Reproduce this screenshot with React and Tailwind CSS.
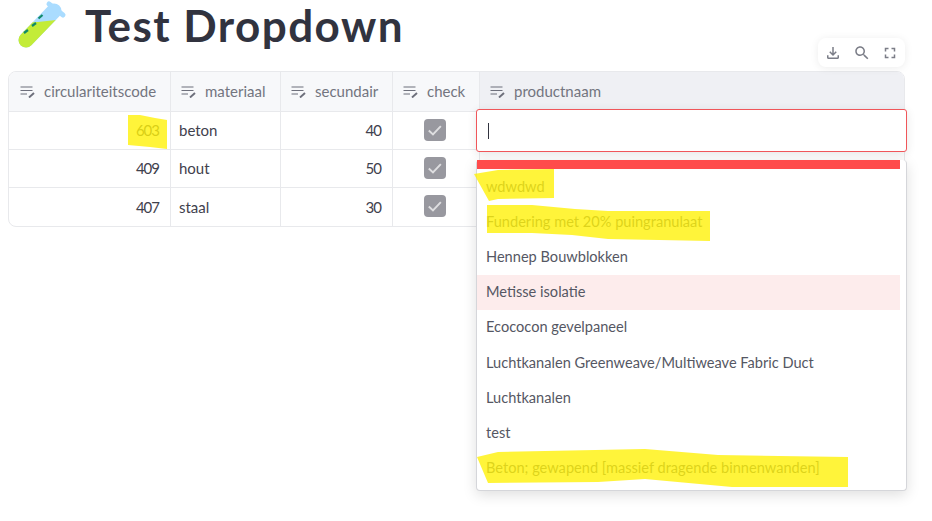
import React from 'react';

const columns = [
    { name: 'circulariteitscode', width: 'w-[162px] pl-[11px]' },
    { name: 'materiaal', width: 'w-[110px] pl-[10px]' },
    { name: 'secundair', width: 'w-[112px] pl-[10px]' },
    { name: 'check', width: 'w-[87px] pl-[10px]' },
];

const rows = [
    { code: 603, material: 'beton', secondary: 40 },
    { code: 409, material: 'hout', secondary: 50 },
    { code: 407, material: 'staal', secondary: 30 },
];

const options = [
    'wdwdwd',
    'Fundering met 20% puingranulaat',
    'Hennep Bouwblokken',
    'Metisse isolatie',
    'Ecococon gevelpaneel',
    'Luchtkanalen Greenweave/Multiweave Fabric Duct',
    'Luchtkanalen',
    'test',
    'Beton; gewapend [massief dragende binnenwanden]',
];

const strokes = [
    '128,115 140,115 155,118 167,120 167,149 150,147 128,145',
    '474,174 498,170 554,169 554,198 498,199 489,201',
    '487,205 532,205 575,209 608,211 710,211 710,241 608,239 572,235 532,233 487,233',
    '477,457 498,452 645,449 718,455 848,457 848,487 732,487 645,479 598,482 488,483',
];

const TestTube = () => (
    <svg width="60" height="52" viewBox="14 0 60 52" className="shrink-0">
        <defs>
            <clipPath id="liquid">
                <polygon points="0,23 38,22 56,20 74,20 74,60 0,60" />
            </clipPath>
        </defs>
        <line x1="26" y1="40" x2="54" y2="11" stroke="#aadcff" strokeWidth="15" strokeLinecap="round" />
        <line x1="26" y1="40" x2="54" y2="11" stroke="#c3ec38" strokeWidth="15" strokeLinecap="round" clipPath="url(#liquid)" />
        <line x1="49" y1="4" x2="63" y2="15" stroke="#aadcff" strokeWidth="5" strokeLinecap="round" />
        <g stroke="#0f8a6a" strokeWidth="2.2">
            <line x1="24" y1="33" x2="28" y2="30" />
            <line x1="32" y1="26" x2="36" y2="23" />
            <line x1="38.5" y1="18.5" x2="42.5" y2="15" />
        </g>
    </svg>
);

const HeaderIcon = () => (
    <svg width="16" height="12" viewBox="0 0 16 12" fill="none" className="shrink-0 text-[#6d6f7b]">
        <path d="M0.5 1h12M0.5 4.5h12M0.5 8h6.5" stroke="currentColor" strokeWidth="1.1" />
        <path d="M9 11.5l5-4.5" stroke="currentColor" strokeWidth="1.9" />
    </svg>
);

const HeaderCell = ({ name, className }) => (
    <div className={`flex items-center gap-[8px] border-r border-[#e8e9ec] ${className}`}>
        <HeaderIcon />
        <span className="text-[15px] text-[#73757f]">{name}</span>
    </div>
);

const CheckBox = () => (
    <div className="w-[22px] h-[22px] rounded-[4px] bg-[#98989f] flex items-center justify-center">
        <svg width="18" height="18" viewBox="0 0 16 16" fill="none">
            <path d="M2.5 8.5l3.7 3.5 7-7.5" stroke="#dedee0" strokeWidth="1.7" />
        </svg>
    </div>
);

const MaterialIcon = ({ d }) => (
    <svg width="18" height="18" viewBox="0 0 24 24" fill="#7b7d87"><path d={d} /></svg>
);

const App = () => {
    return (
        <div className="relative w-[932px] h-[521px] overflow-hidden bg-white font-['Lato','Noto_Sans',sans-serif] text-[#3f414d]">
            <div className="flex items-start h-[55px] pl-[14px] gap-[11px]">
                <TestTube />
                <h1 className="mt-[3px] text-[44px] tracking-[1.45px] font-bold text-[#31333f] leading-none whitespace-nowrap">Test Dropdown</h1>
            </div>

            <div className="relative mt-[16px] mx-[8px] w-[897px]">
                <div className="rounded-lg border border-[#e8e9ec] overflow-hidden bg-white">
                    <div className="flex h-[40px] bg-[#f7f8fa] border-b border-[#e8e9ec]">
                        {columns.map(c => <HeaderCell key={c.name} name={c.name} className={c.width} />)}
                        <HeaderCell name="productnaam" className="flex-1 pl-[10px] bg-[#eff0f4] border-r-0" />
                    </div>
                    {rows.map((r, i) => (
                        <div key={r.code} className={`flex h-[38px] text-[15px] ${i < 2 ? 'border-b border-[#e8e9ec]' : ''}`}>
                            <div className="w-[162px] flex items-center justify-end pr-[11px] tracking-[-1px] border-r border-[#e8e9ec]">{r.code}</div>
                            <div className="w-[110px] flex items-center pl-[8px] border-r border-[#e8e9ec]">{r.material}</div>
                            <div className="w-[112px] flex items-center justify-end pr-[11px] tracking-[-1px] border-r border-[#e8e9ec]">{r.secondary}</div>
                            <div className="w-[87px] flex items-center justify-center pr-[2px] pb-[2px] border-r border-[#e8e9ec]"><CheckBox /></div>
                            <div className="flex-1" />
                        </div>
                    ))}
                </div>

                {/* toolbar above the grid */}
                <div className="absolute right-0 -top-[33px] flex items-center justify-between w-[87px] h-[29px] px-[6px] rounded-lg bg-white shadow-[0_1px_8px_rgba(0,0,0,0.08)]">
                    <MaterialIcon d="M18 15v3H6v-3H4v3c0 1.1.9 2 2 2h12c1.1 0 2-.9 2-2v-3h-2zm-1-4l-1.41-1.41L13 12.17V4h-2v8.17L8.41 9.59 7 11l5 5 5-5z" />
                    <MaterialIcon d="M15.5 14h-.79l-.28-.27C15.41 12.59 16 11.11 16 9.5 16 5.91 13.09 3 9.5 3S3 5.91 3 9.5 5.91 16 9.5 16c1.61 0 3.09-.59 4.23-1.57l.27.28v.79l5 4.99L20.49 19l-4.99-5zm-6 0C7.01 14 5 11.99 5 9.5S7.01 5 9.5 5 14 7.01 14 9.5 11.99 14 9.5 14z" />
                    <MaterialIcon d="M7 14H5v5h5v-2H7v-3zm-2-4h2V7h3V5H5v5zm12 7h-3v2h5v-5h-2v3zM14 5v2h3v3h2V5h-5z" />
                </div>

                {/* open cell editor */}
                <div className="absolute left-[468px] top-[38px] w-[431px] h-[43px] rounded-[3px] border border-[#f0565a] bg-white shadow-[0_2px_10px_rgba(0,0,0,0.1)] flex items-center pl-[11px]">
                    <div className="w-px h-[16px] bg-[#31333f]" />
                </div>

                {/* dropdown list */}
                <div className="absolute left-[468px] top-[89px] w-[431px] h-[331px] rounded-[4px] bg-white border-l border-r border-b border-[#d5d6da] shadow-[0_4px_14px_rgba(0,0,0,0.13)] text-[14.6px] text-[#555763]">
                    <div className="w-[423px] h-[9px] bg-[#ff4b4b]" />
                    <div className="flex flex-col w-[423px]">
                        {options.map(o => (
                            <div key={o} className={`flex items-center h-[35.2px] pl-[9px] whitespace-nowrap ${o === 'Metisse isolatie' ? 'bg-[#fdecec]' : ''}`}>{o}</div>
                        ))}
                    </div>
                </div>
            </div>

            {/* marker strokes drawn on the screenshot */}
            <svg width="932" height="521" className="absolute left-0 top-0 pointer-events-none opacity-80">
                {strokes.map(p => <polygon key={p} points={p} fill="#fff20a" />)}
            </svg>
        </div>
    );
};

export default App;
